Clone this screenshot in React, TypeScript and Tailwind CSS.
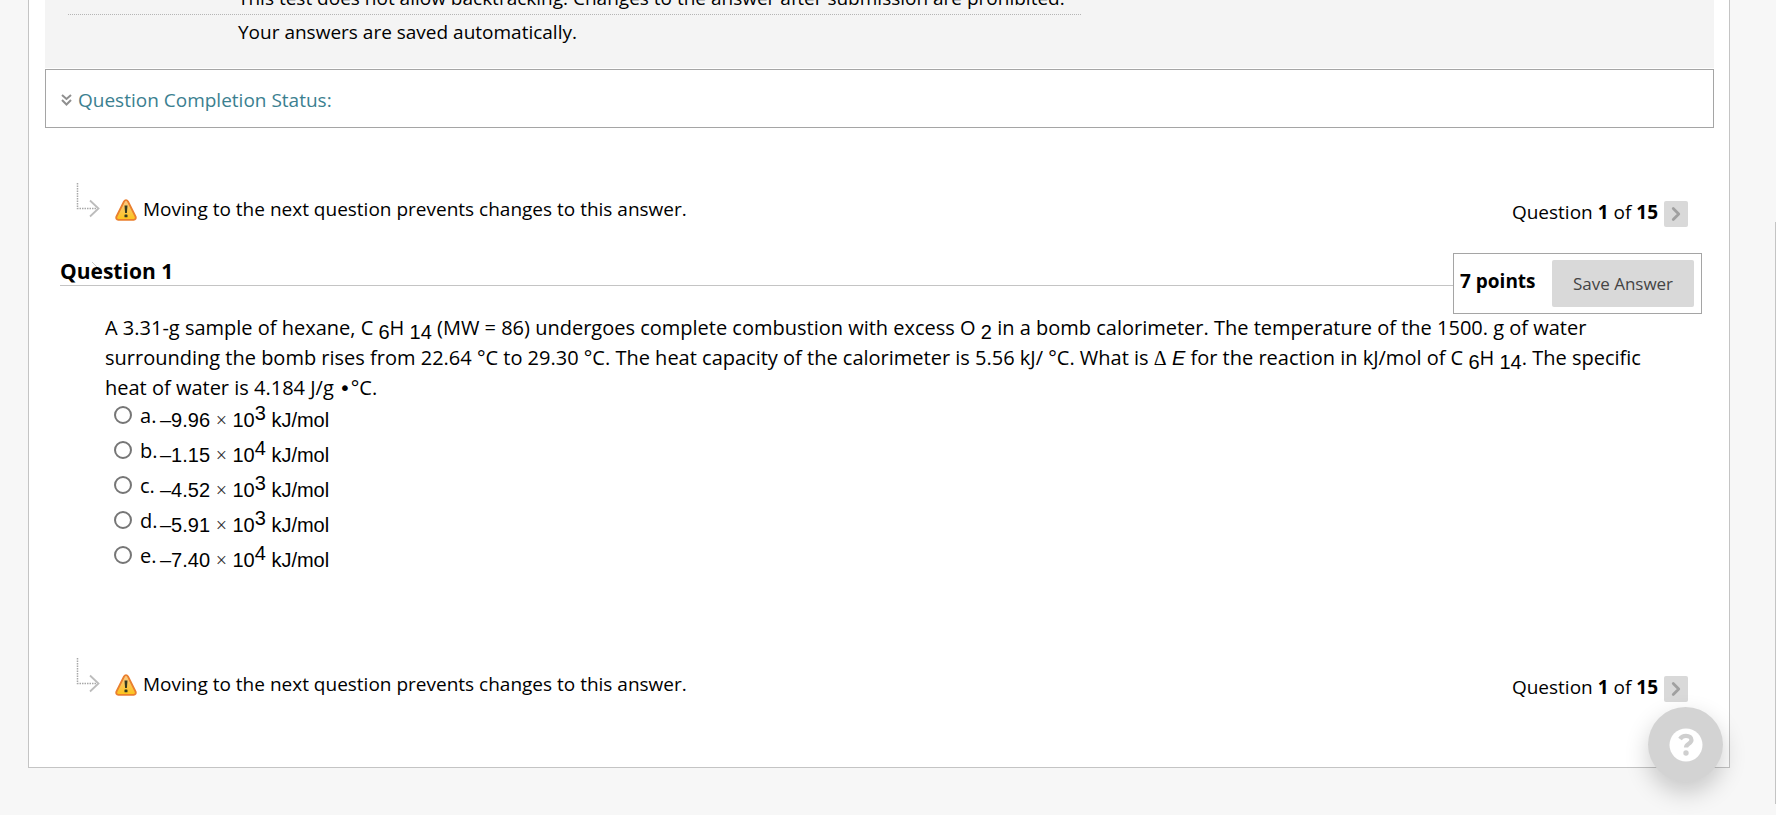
import React from 'react';
import { ChevronRight } from 'lucide-react';

interface Answer {
  letter: string;
  value: string;
  exponent: string;
}

const answers: Answer[] = [
  { letter: 'a', value: '–9.96', exponent: '3' },
  { letter: 'b', value: '–1.15', exponent: '4' },
  { letter: 'c', value: '–4.52', exponent: '3' },
  { letter: 'd', value: '–5.91', exponent: '3' },
  { letter: 'e', value: '–7.40', exponent: '4' },
];

function StepArrow() {
  return (
    <svg width="24" height="35" viewBox="0 0 24 35" fill="none" stroke="#a8a8a8" aria-hidden="true">
      <path d="M1.5 0V25.5H21" strokeWidth="1.5" strokeDasharray="1.5 1" />
      <path d="M14 17.5L22.5 25.5L14 33.5" stroke="#bcbcbc" strokeWidth="1.8" />
    </svg>
  );
}

function WarningIcon() {
  return (
    <svg width="22" height="22" viewBox="0 0 22 22" aria-hidden="true">
      <defs>
        <linearGradient id="warning-fill" x1="0" y1="0" x2="0" y2="1">
          <stop offset="0" stopColor="#fbc98a" />
          <stop offset="1" stopColor="#fcc419" />
        </linearGradient>
      </defs>
      <path
        d="M11 1.2c.9 0 1.5.5 2 1.3l7.5 15c.8 1.7-.1 3.3-1.8 3.3H3.3c-1.7 0-2.6-1.6-1.8-3.3L9 2.5c.5-.8 1.1-1.3 2-1.3z"
        fill="url(#warning-fill)"
        stroke="#ea7f2e"
        strokeWidth="1.8"
      />
      <path d="M9.5 6.5h3l-.6 7.5h-1.8z" fill="#333a20" />
      <rect x="9.5" y="15.5" width="3" height="2.8" rx=".6" fill="#333a20" />
    </svg>
  );
}

function QuestionNav() {
  return (
    <div className="flex justify-between pl-[31px] pr-[26px]">
      <div className="flex self-start">
        <StepArrow />
        <p className="ml-[15px] flex items-end gap-1.5 pt-3.5 leading-6">
          <WarningIcon />
          <span>Moving to the next question prevents changes to this answer.</span>
        </p>
      </div>
      <div className="flex items-start gap-1.5 pt-[18px]">
        <span className="leading-[22px]">
          Question <b>1</b> of <b>15</b>
        </span>
        <button
          type="button"
          aria-label="Next question"
          className="flex h-[26px] w-6 items-center justify-center rounded-xs bg-[#d9d9d9] text-[#a0a0a0]"
        >
          <ChevronRight size={22} strokeWidth={3} />
        </button>
      </div>
    </div>
  );
}

function Sub({ children }: { children: React.ReactNode }) {
  return (
    <span className="relative top-1 font-['Liberation_Sans',sans-serif] leading-none">
      {children}
    </span>
  );
}

function AnswerRow({ letter, value, exponent }: Answer) {
  const id = `answer-${letter}`;
  return (
    <li className="flex items-start">
      <input
        id={id}
        type="radio"
        name="answer"
        className="mt-[3px] size-[18px] appearance-none rounded-full border-2 border-[#767676] bg-white"
      />
      <label htmlFor={id} className="flex pl-2">
        <span className="w-5 whitespace-nowrap leading-[26px]">{letter}.</span>
        <span className="pt-1 font-['Liberation_Sans',sans-serif] leading-[26px]">
          {value} <span className="font-['Liberation_Serif',serif] text-[#333]">×</span> 10
          <span className="relative -top-[7px]">{exponent}</span> kJ/mol
        </span>
      </label>
    </li>
  );
}

export default function App() {
  return (
    <div className="overflow-hidden bg-[#f7f7f7] pb-[47px] pl-7 pr-[46px] font-['Open_Sans',sans-serif] text-[19px] text-black">
      <main className="border border-t-0 border-[#c4c4c4] bg-white pb-[65px] pl-4 pr-[15px]">
        <section className="-mt-[15px] bg-[#f4f4f4] pb-[22px] pl-[23px]">
          <div className="w-fit border-b border-dotted border-[#b5b5b5] pb-0.5 pl-[170px] pr-4 leading-[27px]">
            This test does not allow backtracking. Changes to the answer after submission are prohibited.
          </div>
          <div className="pl-[170px] pt-1 leading-[27px]">Your answers are saved automatically.</div>
        </section>

        <section className="mt-px border border-[#a5a5a5] px-[15px] pb-[13px] pt-4">
          <a href="#status" className="flex items-center gap-1.5 leading-7 text-[#3b8090]">
            <svg width="11" height="12" viewBox="0 0 11 12" fill="none" stroke="#8f8f8f" strokeWidth="2" aria-hidden="true">
              <path d="M1 1l4.5 4L10 1M1 6l4.5 4.5L10 6" />
            </svg>
            Question Completion Status:
          </a>
        </section>

        <div className="pt-[55px]">
          <QuestionNav />
        </div>

        <section className="pl-[15px] pr-3 pt-[26px]">
          <header className="flex items-start">
            <h2 className="relative flex-1 border-b border-[#c4c4c4] pt-1 text-[21px] font-bold leading-7">
              <svg className="absolute left-[31px] top-2" width="9" height="12" viewBox="0 0 9 12" fill="none" stroke="#c9c9c9" aria-hidden="true">
                <path d="M1 1l6 6-3 4" />
              </svg>
              <span className="relative">Question 1</span>
            </h2>
            <div className="flex items-start border border-[#a5a5a5] py-1.5 pl-1.5 pr-[7px]">
              <span className="w-[92px] font-bold leading-[42px]">7 points</span>
              <button type="button" className="h-[47px] w-[142px] rounded-xs bg-[#d9d9d9] text-[17px] text-[#444]">
                Save Answer
              </button>
            </div>
          </header>

          <div className="-mt-px pl-[45px] pr-12 text-xl">
            <p className="leading-[30px]">
              A 3.31-g sample of hexane, C <Sub>6</Sub>H <Sub>14</Sub> (MW = 86) undergoes complete combustion
              with excess O <Sub>2</Sub> in a bomb calorimeter. The temperature of the 1500. g of water
              surrounding the bomb rises from 22.64 °C to 29.30 °C. The heat capacity of the calorimeter is
              5.56 kJ/ °C. What is <span className="font-['Liberation_Serif',serif]">Δ</span>{' '}
              <i className="font-['Liberation_Sans',sans-serif]">E</i> for the reaction in kJ/mol of C{' '}
              <Sub>6</Sub>H <Sub>14</Sub>. The specific heat of water is 4.184 J/g{' '}
              <span className="font-['DejaVu_Sans',sans-serif] leading-none">•</span>°C.
            </p>
            <ul className="grid auto-rows-[30px] gap-[5px] pb-[5px] pl-[9px]">
              {answers.map((answer) => (
                <AnswerRow key={answer.letter} {...answer} />
              ))}
            </ul>
          </div>
        </section>

        <div className="pt-20">
          <QuestionNav />
        </div>
      </main>

      <button
        type="button"
        aria-label="Help"
        className="fixed bottom-[38px] right-[53px] flex size-[75px] items-center justify-center rounded-full bg-[#d3d3d3] shadow-[0_10px_24px_rgba(0,0,0,0.2)]"
      >
        <svg width="34" height="34" viewBox="0 0 34 34" fill="none" aria-hidden="true">
          <circle cx="17" cy="17" r="16.5" fill="#fff" />
          <path d="M11 11c1.5-2.3 3.5-3.2 6-3.2 3.3 0 5.5 1.6 5.5 4.2 0 3.8-5.5 3.6-5.5 7.5" stroke="#cfcfcf" strokeWidth="4.2" />
          <circle cx="17" cy="25" r="2.7" fill="#cfcfcf" />
        </svg>
      </button>
      <div className="fixed bottom-4 right-0 top-[222px] w-px bg-[#c4c4c4]" />
    </div>
  );
}
